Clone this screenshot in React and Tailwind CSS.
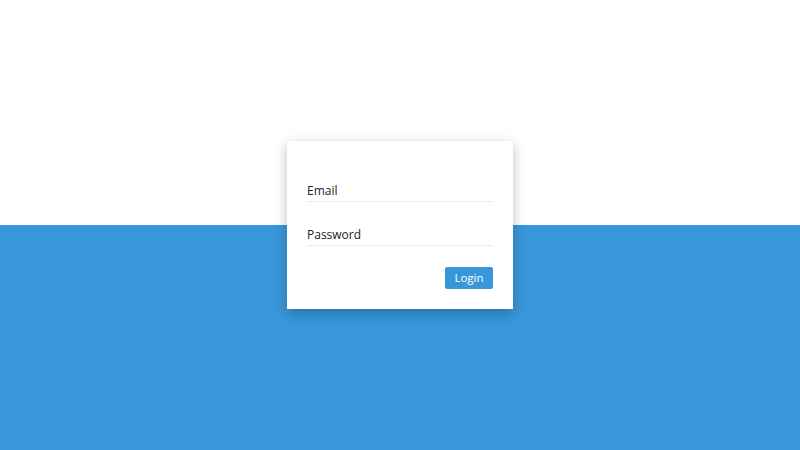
export default function App() {
  return (
    <div
      className="h-[450px] w-full flex items-center justify-center bg-[linear-gradient(to_bottom,#ffffff_225px,#3797d9_225px)]"
      style={{ fontFamily: '"Open Sans", "Liberation Sans", sans-serif' }}
    >
      <div className="w-[226px] h-[168px] bg-white shadow-[0_4px_12px_rgba(0,0,0,0.25)] px-5 pt-[39px] flex flex-col">
        <input
          type="email"
          placeholder="Email"
          className="w-full h-[22px] text-[12px] text-[#222] placeholder:text-[#222] border-b border-[#ececec] outline-none pb-0"
        />
        <input
          type="password"
          placeholder="Password"
          className="w-full h-[22px] mt-[22px] text-[12px] text-[#222] placeholder:text-[#222] border-b border-[#ececec] outline-none pb-0"
        />
        <div className="flex justify-end mt-[21px]">
          <button className="w-[48px] h-[22px] rounded-[2px] bg-[#3797d9] text-white text-[11.5px] leading-none">
            Login
          </button>
        </div>
      </div>
    </div>
  )
}
